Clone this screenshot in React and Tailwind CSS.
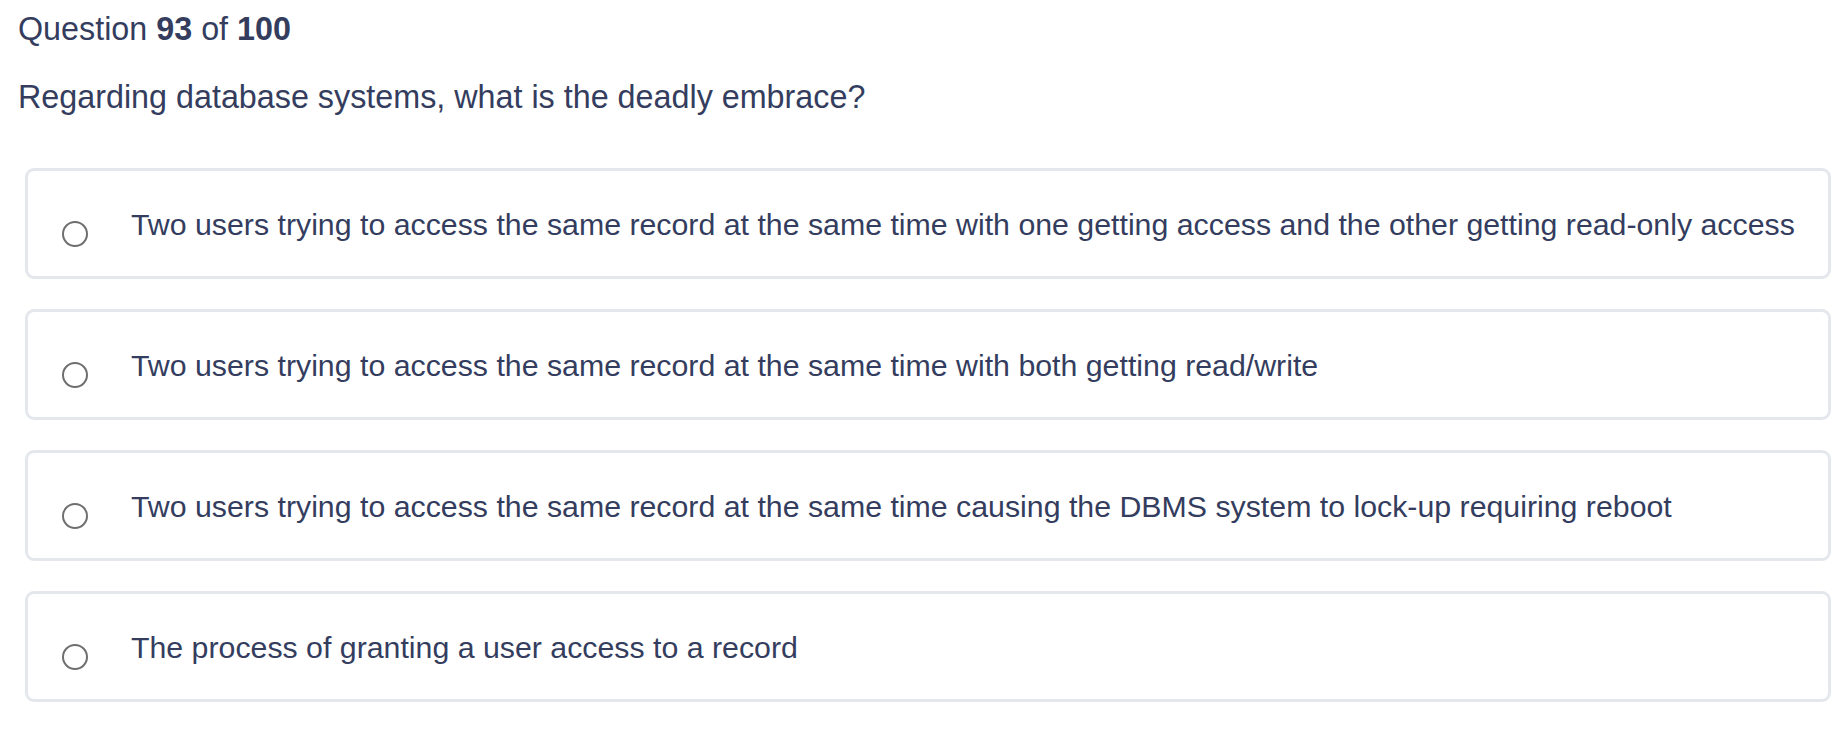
const options = [
  'Two users trying to access the same record at the same time with one getting access and the other getting read-only access',
  'Two users trying to access the same record at the same time with both getting read/write',
  'Two users trying to access the same record at the same time causing the DBMS system to lock-up requiring reboot',
  'The process of granting a user access to a record',
]

export default function App() {
  return (
    <div
      className="min-h-screen bg-white pl-[25px] pr-[11px] text-[#343d5e]"
      style={{ fontFamily: '"Liberation Sans", Arial, sans-serif' }}
    >
      {/* Header */}
      <div className="-ml-[7px] pt-[11px] text-[32.3px] leading-[36px]">
        Question <span className="font-bold">93</span> of <span className="font-bold">100</span>
      </div>
      <h1 className="-ml-[7px] mt-[32px] text-[32.3px] leading-[36px] font-normal">
        Regarding database systems, what is the deadly embrace?
      </h1>

      {/* Answer choices */}
      <div className="mt-[53px] flex flex-col gap-[30px]">
        {options.map((opt, i) => (
          <label
            key={i}
            className="flex items-start rounded-[9px] border-[3px] border-[#e4e7ec] bg-white pl-[34px] pt-[31px] pb-[29px] cursor-pointer"
          >
            <span className="mt-[19px] h-[26px] w-[26px] shrink-0 rounded-full border-2 border-[#6e6e6e] bg-white" />
            <span className="ml-[43px] text-[30.3px] leading-[45px]">{opt}</span>
          </label>
        ))}
      </div>
    </div>
  )
}
